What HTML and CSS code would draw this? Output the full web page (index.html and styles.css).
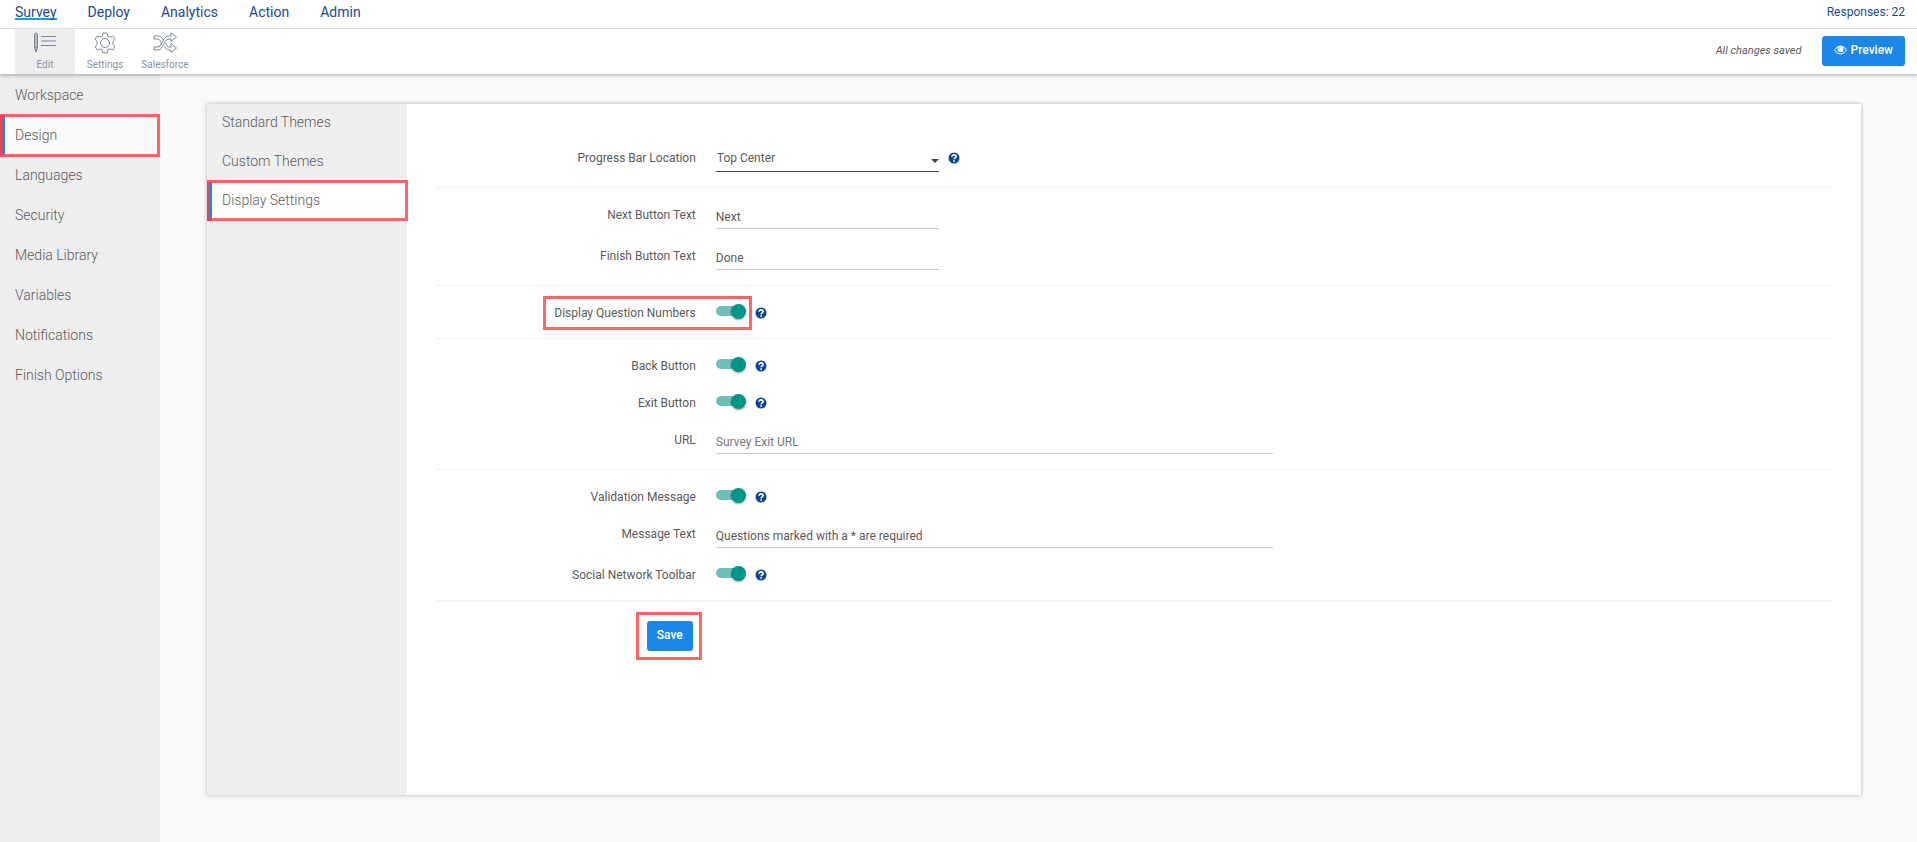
FILE: index.html
```html
<!DOCTYPE html>
<html lang="en">
<head>
  <meta charset="utf-8">
  <title>Survey - Display Settings</title>
  <link rel="stylesheet" href="styles.css">
</head>
<body>
  <svg class="sprite" aria-hidden="true">
    <symbol id="icon-help" viewBox="0 0 12 12">
      <circle cx="6" cy="6" r="5.5" fill="#0b4596"/>
      <path d="M4 4.7C4 3.4 4.9 2.9 6 2.9s2.1.6 2.1 1.7C8.100 5.800 6.200 5.900 6.200 7.200M6.100 8.200v1.500" fill="none" stroke="#fff" stroke-width="1.700"/>
    </symbol>
  </svg>

  <header>
    <nav class="top-nav">
      <a href="#" class="active">Survey</a>
      <a href="#">Deploy</a>
      <a href="#">Analytics</a>
      <a href="#">Action</a>
      <a href="#">Admin</a>
      <span class="responses">Responses: 22</span>
    </nav>

    <div class="toolbar">
      <a href="#" class="tool active">
        <svg width="24" height="22" viewBox="0 0 24 22" fill="none" stroke="#7d8797">
          <path d="M1.500 2.500q0-1.500 1.500-1.500t1.500 1.500v13L3 19.500 1.500 15.500zM3 2v13M1.500 15.500h3"/>
          <path d="M2.200 17h1.600L3 20z" fill="#7d8797"/>
          <path d="M8 4.500h15M8 13.500h15"/>
          <path d="M8 9h15" stroke="#b4bac3" stroke-width="2"/>
        </svg>
        Edit
      </a>
      <a href="#" class="tool">
        <svg width="24" height="22" viewBox="0 0 24 22" fill="none" stroke="#7d8797">
          <path d="M10 1h4l.8 3 2 1 3-1 2 3.200-1.800 2.300v3l1.800 2.300-2 3.200-3-1-2 1-.8 3h-4l-.8-3-2-1-3 1-2-3.200L4 12.500v-3L2.200 7.200l2-3.200 3 1 2-1z" stroke-linejoin="round"/>
          <circle cx="12" cy="11" r="4.500"/>
        </svg>
        Settings
      </a>
      <a href="#" class="tool">
        <svg width="24" height="22" viewBox="0 0 24 22" fill="none" stroke="#7d8797" stroke-linejoin="round">
          <path d="M1 4h3.500c3 0 4.500 1.500 5.600 4M1 4v3h3.500c2 0 3 1.500 4 4-1 2.500-2 4-4 4H1v3h3.500c7 0 5.500-11 11.500-11h2v2.500l5.500-4.500L18 1v3h-2C9 4 10 15 4.500 15"/>
          <path d="M11.500 14c1 2.500 2.500 4 5 4H18v2.500l5.500-4.500-5.500-4.500V15h-2c-1.500 0-2.500-1.500-3.200-4"/>
        </svg>
        Salesforce
      </a>
      <div class="toolbar-right">
        <em class="save-status">All changes saved</em>
        <button type="button" class="btn preview">
          <svg width="13" height="10" viewBox="0 0 13 10">
            <path d="M.5 5Q3 1 6.500 1t6 4q-2.500 4-6 4t-6-4z" fill="none" stroke="#fff"/>
            <circle cx="6.500" cy="4.200" r="3" fill="#fff"/>
            <path d="M4.800 4.200q0-1.600 1.600-1.600" fill="none" stroke="#1b87e6" stroke-width=".7"/>
          </svg>
          Preview
        </button>
      </div>
    </div>
  </header>

  <div class="page">
    <nav class="sidebar">
      <a href="#">Workspace</a>
      <a href="#" class="active callout">Design</a>
      <a href="#">Languages</a>
      <a href="#">Security</a>
      <a href="#">Media Library</a>
      <a href="#">Variables</a>
      <a href="#">Notifications</a>
      <a href="#">Finish Options</a>
    </nav>

    <main>
      <div class="panel">
        <nav class="sub-nav">
          <a href="#">Standard Themes</a>
          <a href="#">Custom Themes</a>
          <a href="#" class="active callout">Display Settings</a>
        </nav>

        <form class="settings">
          <section>
            <div class="row text-row">
              <label for="progress">Progress Bar Location</label>
              <div class="select-wrap">
                <select id="progress">
                  <option>Top Center</option>
                </select>
              </div>
              <button type="button" class="help" aria-label="Help"><svg><use href="#icon-help"/></svg></button>
            </div>
          </section>

          <section>
            <div class="row text-row">
              <label for="next">Next Button Text</label>
              <input type="text" id="next" class="short" value="Next">
            </div>
            <div class="row text-row">
              <label for="finish">Finish Button Text</label>
              <input type="text" id="finish" class="short" value="Done">
            </div>
          </section>

          <section>
            <div class="row">
              <label for="numbers">Display Question Numbers</label>
              <span class="switch callout callout-row"><input type="checkbox" id="numbers" checked></span>
              <button type="button" class="help" aria-label="Help"><svg><use href="#icon-help"/></svg></button>
            </div>
          </section>

          <section>
            <div class="row">
              <label for="back">Back Button</label>
              <span class="switch"><input type="checkbox" id="back" checked></span>
              <button type="button" class="help" aria-label="Help"><svg><use href="#icon-help"/></svg></button>
            </div>
            <div class="row">
              <label for="exit">Exit Button</label>
              <span class="switch"><input type="checkbox" id="exit" checked></span>
              <button type="button" class="help" aria-label="Help"><svg><use href="#icon-help"/></svg></button>
            </div>
            <div class="row text-row">
              <label for="url">URL</label>
              <input type="text" id="url" class="long" placeholder="Survey Exit URL">
            </div>
          </section>

          <section>
            <div class="row">
              <label for="validation">Validation Message</label>
              <span class="switch"><input type="checkbox" id="validation" checked></span>
              <button type="button" class="help" aria-label="Help"><svg><use href="#icon-help"/></svg></button>
            </div>
            <div class="row text-row">
              <label for="message">Message Text</label>
              <input type="text" id="message" class="long" value="Questions marked with a * are required">
            </div>
            <div class="row">
              <label for="social">Social Network Toolbar</label>
              <span class="switch"><input type="checkbox" id="social" checked></span>
              <button type="button" class="help" aria-label="Help"><svg><use href="#icon-help"/></svg></button>
            </div>
          </section>

          <div class="actions">
            <span class="callout callout-save"><button type="button" class="btn">Save</button></span>
          </div>
        </form>
      </div>
    </main>
  </div>
</body>
</html>
```
FILE: styles.css
```css
* {
  box-sizing: border-box;
}

body {
  margin: 0;
  min-height: 100vh;
  display: flex;
  flex-direction: column;
  font-family: Roboto, "Liberation Sans", sans-serif;
  font-size: 12px;
  color: #5a5a5a;
  background-color: #f9f9f9;
}

a {
  color: inherit;
  text-decoration: none;
}

.sprite {
  position: absolute;
  width: 0;
  height: 0;
}

/* header */
header {
  position: relative;
  z-index: 2;
  background-color: #fff;
  box-shadow: 0 1px 4px rgba(0, 0, 0, 0.35);
}

.top-nav {
  display: flex;
  gap: 31px;
  height: 29px;
  padding: 2px 12px 0 15px;
  border-bottom: 1px solid #ddd;
  color: #1b4a8f;
  font-size: 14px;
  line-height: 20px;
}

.top-nav .active {
  height: 18px;
  border-bottom: 2px solid #1b9cdf;
}

.responses {
  margin-left: auto;
  font-size: 12px;
}

.toolbar {
  display: flex;
  height: 45px;
  padding: 0 12px 0 15px;
}

.tool {
  display: flex;
  flex-direction: column;
  align-items: center;
  width: 60px;
  padding-top: 3px;
  font-size: 10px;
  line-height: 18px;
  color: #8a93a1;
}

.tool svg {
  margin-bottom: 2px;
}

.tool.active {
  background-color: #eee;
}

.toolbar-right {
  display: flex;
  align-items: center;
  gap: 20px;
  margin-left: auto;
  padding-bottom: 2px;
}

.save-status {
  font-size: 11px;
}

.btn {
  height: 30px;
  padding: 0 10px 2px;
  border: none;
  border-radius: 3px;
  background-color: #1b87e6;
  color: #fff;
  font-family: inherit;
  font-size: 12px;
  font-weight: 500;
  cursor: pointer;
}

.preview {
  display: flex;
  align-items: center;
  gap: 4px;
  padding: 0 12px 2px;
}

/* side menus */
.page {
  flex: 1;
  display: flex;
}

.sidebar {
  width: 160px;
  padding-top: 1px;
  background-color: #eee;
}

.sidebar a,
.sub-nav a {
  display: block;
  padding-left: 15px;
  font-size: 14px;
  font-weight: 300;
  line-height: 40px;
}

.sidebar .active {
  background-color: #f9f9f9;
  box-shadow: inset 5px 0 #1b87e6;
}

.sub-nav {
  width: 200px;
  background-color: #efefef;
}

.sub-nav a {
  height: 39px;
  line-height: 37px;
}

.sub-nav .active {
  background-color: #fff;
  box-shadow: inset 5px 0 #1b87e6;
}

/* red highlight frames */
.callout {
  position: relative;
}

.callout::after {
  content: "";
  position: absolute;
  inset: -1px 0 -2px;
  border: 3px solid rgba(255, 63, 63, 0.8);
  pointer-events: none;
}

.sub-nav .callout::after {
  inset: -2px -1px 0 0;
}

.callout-row::after {
  inset: -7px -6px -11px -173px;
}

.callout-save::after {
  inset: -9px -9px -9px -11px;
}

/* content */
main {
  flex: 1;
  display: flex;
  padding: 30px 56px 47px 47px;
}

.panel {
  flex: 1;
  display: flex;
  background-color: #fff;
  box-shadow: 0 0 4px rgba(0, 0, 0, 0.3);
}

.settings {
  flex: 1;
  padding: 27px 30px 0;
}

.settings section {
  padding: 8px 0 7px;
  border-bottom: 1px solid #eee;
}

.settings section:first-child {
  padding-top: 0;
  margin-top: 8px;
}

.row {
  display: flex;
  align-items: flex-start;
  height: 37px;
}

.text-row {
  height: 41px;
}

.row label {
  width: 20%;
  padding: 9px 20px 0 0;
  line-height: 20px;
  text-align: right;
}

.row input[type="text"],
.row select {
  height: 24px;
  margin-top: 9px;
  padding: 0;
  border: none;
  border-bottom: 1px solid #c8c8c8;
  border-radius: 0;
  background: none;
  font-family: inherit;
  font-size: 12px;
  color: #5a5a5a;
}

.row input::placeholder {
  color: #777;
}

.row .short,
.select-wrap {
  width: 16%;
}

.row .long {
  width: 40%;
}

.select-wrap {
  position: relative;
}

.row select {
  width: 100%;
  padding: 0 0 4px 1px;
  border-bottom-color: #444;
  appearance: none;
}

.select-wrap::after {
  content: "";
  position: absolute;
  right: 0;
  top: 20px;
  border: 4px solid transparent;
  border-top-color: #444;
  border-bottom: none;
}

.help {
  width: 12px;
  height: 12px;
  margin: 13px 0 0 9px;
  padding: 0;
  border: none;
  background: none;
  cursor: pointer;
}

.help svg {
  display: block;
  width: 12px;
  height: 12px;
}

.switch {
  width: 30px;
  height: 16px;
  margin-top: 9px;
}

.switch input {
  display: flex;
  align-items: center;
  width: 30px;
  height: 16px;
  margin: 0;
  appearance: none;
  cursor: pointer;
}

.switch input::before {
  content: "";
  width: 22px;
  height: 10px;
  border-radius: 5px 0 0 5px;
  background-color: #6dbfb8;
}

.switch input::after {
  content: "";
  flex: none;
  width: 15px;
  height: 15px;
  margin-left: -7px;
  border-radius: 50%;
  background-color: #009688;
  box-shadow: 0 1px 2px rgba(0, 0, 0, 0.4);
}

.actions {
  display: flex;
  justify-content: flex-end;
  width: 20%;
  padding: 20px 23px 20px 0;
}
```
